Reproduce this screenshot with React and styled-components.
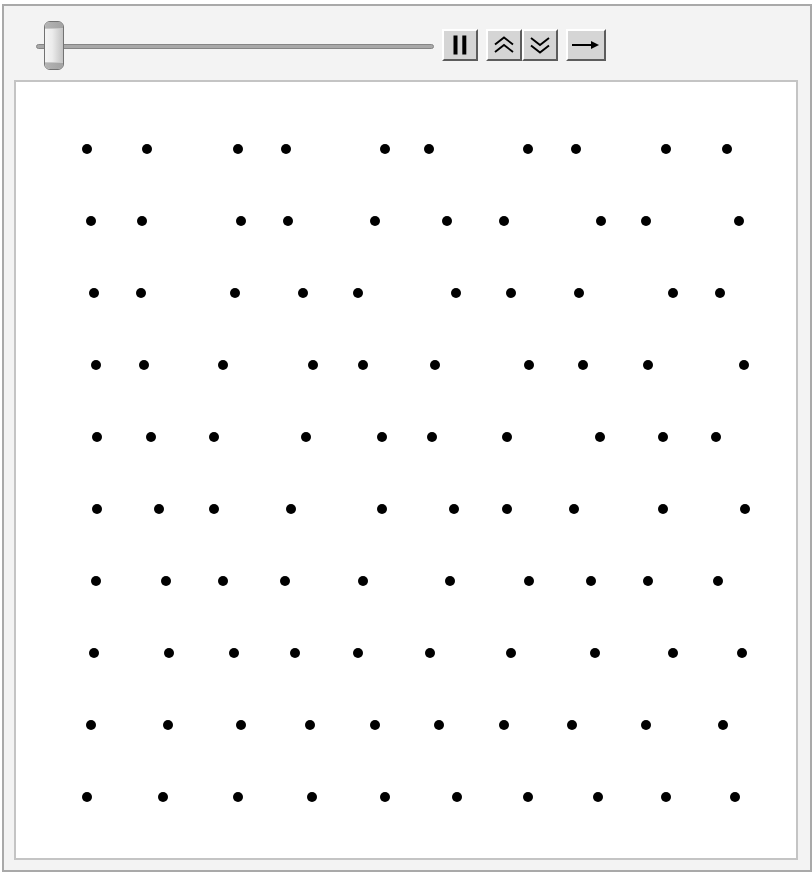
import React from "react";
import styled, { createGlobalStyle } from "styled-components";

const Global = createGlobalStyle`
  html, body { margin: 0; padding: 0; background: #ffffff; }
  body { font-family: "Liberation Sans", Arial, sans-serif; }
`;

const Page = styled.div`
  padding: 4px 0 0 2px;
`;

const Frame = styled.div`
  box-sizing: border-box;
  width: 810px;
  height: 868px;
  border: 2px solid #a9a9a9;
  background: #f3f3f3;
  display: flex;
  flex-direction: column;
`;

const Toolbar = styled.div`
  box-sizing: border-box;
  height: 74px;
  padding: 15px 0 0 32px;
  display: flex;
  align-items: flex-start;
  gap: 8px;
`;

const Slider = styled.div`
  position: relative;
  width: 398px;
  height: 49px;
  display: flex;
  align-items: center;
`;

const Track = styled.div`
  box-sizing: border-box;
  width: 100%;
  height: 5px;
  margin-top: 1px;
  border-radius: 3px;
  background: #a8a8a8;
  border: 1px solid #858585;
`;

const Thumb = styled.div`
  position: absolute;
  left: 8px;
  top: 0;
  box-sizing: border-box;
  width: 20px;
  height: 49px;
  border: 1px solid #727272;
  border-radius: 6px;
  background: linear-gradient(to right, #f4f4f4 0%, #ececec 40%, #c2c2c2 100%);
  overflow: hidden;
  &::before, &::after {
    content: "";
    position: absolute;
    left: 0;
    right: 0;
    height: 6px;
    background: linear-gradient(to right, #b4b4b4, #a2a2a2);
  }
  &::before { top: 0; border-bottom: 1px solid #c8c8c8; }
  &::after { bottom: 0; border-top: 1px solid #c8c8c8; }
`;

const Group = styled.div`
  display: flex;
  margin-top: 8px;
`;

const Button = styled.div`
  box-sizing: border-box;
  width: ${(p) => p.$w || 36}px;
  height: 32px;
  background: #d5d5d5;
  border-style: solid;
  border-width: 2px;
  border-color: #ffffff #5c5c5c #5c5c5c #ffffff;
  display: flex;
  align-items: center;
  justify-content: center;
`;

const Panel = styled.div`
  box-sizing: border-box;
  margin-left: 10px;
  width: 784px;
  height: 780px;
  border: 2px solid #c4c4c4;
  background: #ffffff;
  display: flex;
`;

const Plot = styled.svg`
  display: block;
  width: 780px;
  height: 776px;
`;

const rows = [
  [87, 147, 238, 286, 385, 429, 528, 576, 666, 727],
  [91, 142, 241, 288, 375, 447, 504, 601, 646, 739],
  [94, 141, 235, 303, 358, 456, 511, 579, 673, 720],
  [96, 144, 223, 313, 363, 435, 529, 583, 648, 744],
  [97, 151, 214, 306, 382, 432, 507, 600, 663, 716],
  [97, 159, 214, 291, 382, 454, 507, 574, 663, 745],
  [96, 166, 223, 285, 363, 450, 529, 591, 648, 718],
  [94, 169, 234, 295, 358, 430, 511, 595, 673, 742],
  [91, 168, 241, 310, 375, 439, 504, 572, 646, 723],
  [87, 163, 238, 312, 385, 457, 528, 598, 666, 735],
];

const PauseIcon = () => (
  <svg width="14" height="20" viewBox="0 0 14 20">
    <rect x="0.5" y="0.5" width="4" height="19" fill="#000" />
    <rect x="9.3" y="0.5" width="4" height="19" fill="#000" />
  </svg>
);

const UpIcon = () => (
  <svg width="20" height="18" viewBox="0 0 20 18">
    <path d="M1 8.5 L10 1.5 L19 8.5 M1 16 L10 9 L19 16" fill="none" stroke="#000" strokeWidth="1.9" />
  </svg>
);

const DownIcon = () => (
  <svg width="20" height="18" viewBox="0 0 20 18">
    <path d="M1 2 L10 9 L19 2 M1 9.5 L10 16.5 L19 9.5" fill="none" stroke="#000" strokeWidth="1.9" />
  </svg>
);

const ArrowIcon = () => (
  <svg width="28" height="10" viewBox="0 0 28 10">
    <path d="M0 5 H21" stroke="#000" strokeWidth="2" />
    <path d="M19 1 L27 5 L19 9 Z" fill="#000" />
  </svg>
);

export default function App() {
  return (
    <Page>
      <Global />
      <Frame>
        <Toolbar>
          <Slider>
            <Track />
            <Thumb />
          </Slider>
          <Group>
            <Button $w={36}><PauseIcon /></Button>
          </Group>
          <Group>
            <Button $w={36}><UpIcon /></Button>
            <Button $w={36}><DownIcon /></Button>
          </Group>
          <Group>
            <Button $w={40}><ArrowIcon /></Button>
          </Group>
        </Toolbar>
        <Panel>
          <Plot viewBox="0 0 780 776">
            {rows.map((xs, r) =>
              xs.map((x, i) => (
                <circle key={`${r}-${i}`} cx={x - 16} cy={149 + r * 72 - 82} r="5" fill="#000" />
              ))
            )}
          </Plot>
        </Panel>
      </Frame>
    </Page>
  );
}
